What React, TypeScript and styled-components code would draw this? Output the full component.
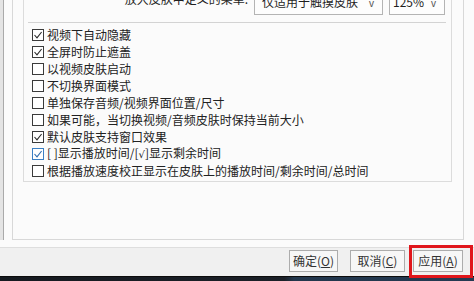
import React from "react";
import styled, { createGlobalStyle } from "styled-components";

const Global = createGlobalStyle`
  html, body {
    margin: 0;
    padding: 0;
    width: 474px;
    height: 281px;
    overflow: hidden;
    background: #fbfbfb;
  }
  body {
    font-family: "Noto Sans CJK SC", "Noto Sans", sans-serif;
    color: #1e1e1e;
  }
  * { box-sizing: border-box; }
`;

const Screen = styled.div`
  width: 474px;
  height: 281px;
  display: flex;
  flex-direction: column;
  background: #fbfbfb;
  overflow: hidden;
`;

const Workspace = styled.div`
  height: 240px;
  flex-shrink: 0;
  display: flex;
`;

const SidePane = styled.div`
  width: 4px;
  background: #e4e4e4;
  border-right: 1px solid #aaaaaa;
`;

const TabPage = styled.div`
  width: 452px;
  margin: -40px 0 0 8px;
  border: 1px solid #d8d8d8;
  border-top: none;
  padding: 0 11px 0 10px;
  display: flex;
  flex-direction: column;
`;

const GroupBox = styled.div`
  border: 1px solid #dcdcdc;
  border-top: none;
  padding: 34px 0 2px 0;
  display: flex;
  flex-direction: column;
`;

const FieldRow = styled.div`
  height: 21px;
  display: flex;
  justify-content: flex-end;
  align-items: center;
  gap: 6px;
  padding-right: 6px;
  font-size: 12px;
`;

const FieldLabel = styled.span`
  line-height: 21px;
  margin-top: -12px;
`;

const Select = styled.div<{ $w: number; $pl: number }>`
  width: ${(p) => p.$w}px;
  height: 21px;
  border: 1px solid #b4b4b4;
  background: #fdfdfd;
  display: flex;
  align-items: center;
  justify-content: space-between;
  padding: 0 8px 0 ${(p) => p.$pl}px;
  font-size: 12px;
  line-height: 21px;
`;

const SelectText = styled.span`
  margin-top: -6px;
`;

const Caret = styled.span`
  font-family: "Liberation Sans", sans-serif;
  font-size: 10px;
  color: #555;
  margin-top: -3px;
`;

const Separator = styled.div`
  height: 1px;
  background: #d3d3d3;
  margin: 7px 5px 0 4px;
`;

const List = styled.div`
  margin-top: 3px;
  padding-left: 8px;
  display: flex;
  flex-direction: column;
`;

const Row = styled.label`
  height: 17px;
  display: flex;
  align-items: center;
  gap: 3px;
  font-size: 12px;
  line-height: 17px;
  white-space: nowrap;
  color: #222;
`;

const Root = styled.span`
  font-family: "DejaVu Sans", sans-serif;
  font-size: 10px;
`;

const Box = styled.span<{ $hot?: boolean }>`
  width: 12px;
  height: 12px;
  flex-shrink: 0;
  border: 1px solid ${(p) => (p.$hot ? "#3a7fc4" : "#3a3a3a")};
  background: #ffffff;
  display: flex;
  align-items: center;
  justify-content: center;
`;

const Footer = styled.div`
  margin-top: 7px;
  height: 29px;
  border-top: 1px solid #dedede;
  background: #f0f0f0;
  display: flex;
  justify-content: flex-end;
  align-items: flex-start;
  padding: 2px 11px 0 0;
`;

const Button = styled.div<{ $w: number; $ml: number }>`
  position: relative;
  width: ${(p) => p.$w}px;
  height: 22px;
  margin-left: ${(p) => p.$ml}px;
  border: 1px solid #acacac;
  background: #f7f7f7;
  display: flex;
  align-items: center;
  justify-content: center;
  font-size: 12px;
  color: #333;
  line-height: 20px;
`;

const Accel = styled.span`
  text-decoration: underline;
`;

const Highlight = styled.div`
  position: absolute;
  top: -6px;
  left: -5px;
  right: -11px;
  bottom: -7px;
  border: 3px solid #e0161b;
  pointer-events: none;
`;

const Taskbar = styled.div`
  height: 5px;
  border-top: 1px solid #0c0c0c;
  background: linear-gradient(90deg, #161a20 0%, #1b2028 60%, #22364c 62%, #243a52 100%);
`;

const Check: React.FC<{ color: string }> = ({ color }) => (
  <svg width="10" height="10" viewBox="0 0 10 10">
    <polyline points="1.5,5 4,7.8 8.6,2" fill="none" stroke={color} strokeWidth="1.1" />
  </svg>
);

const items: { text: React.ReactNode; key: string; checked: boolean; hot?: boolean }[] = [
  { key: "a", text: "视频下自动隐藏", checked: true },
  { key: "b", text: "全屏时防止遮盖", checked: true },
  { key: "c", text: "以视频皮肤启动", checked: false },
  { key: "d", text: "不切换界面模式", checked: false },
  { key: "e", text: "单独保存音频/视频界面位置/尺寸", checked: false },
  { key: "f", text: "如果可能，当切换视频/音频皮肤时保持当前大小", checked: false },
  { key: "g", text: "默认皮肤支持窗口效果", checked: true },
  {
    key: "h",
    text: (
      <>
        [ ]显示播放时间/[<Root>√</Root>]显示剩余时间
      </>
    ),
    checked: true,
    hot: true,
  },
  { key: "i", text: "根据播放速度校正显示在皮肤上的播放时间/剩余时间/总时间", checked: false },
];

export default function App() {
  return (
    <Screen>
      <Global />
      <Workspace>
        <SidePane />
        <TabPage>
          <GroupBox>
            <FieldRow>
              <FieldLabel>放大皮肤中定义的菜单:</FieldLabel>
              <Select $w={129} $pl={7}>
                <SelectText>仅适用于触摸皮肤</SelectText>
                <Caret>v</Caret>
              </Select>
              <Select $w={56} $pl={3}>
                <SelectText>125%</SelectText>
                <Caret>v</Caret>
              </Select>
            </FieldRow>
            <Separator />
            <List>
              {items.map((it) => (
                <Row key={it.key}>
                  <Box $hot={it.hot}>
                    {it.checked && <Check color={it.hot ? "#2f6db0" : "#2a2a2a"} />}
                  </Box>
                  <span>{it.text}</span>
                </Row>
              ))}
            </List>
          </GroupBox>
        </TabPage>
      </Workspace>
      <Footer>
        <Button $w={49} $ml={0}>
          确定(<Accel>O</Accel>)
        </Button>
        <Button $w={55} $ml={12}>
          取消(<Accel>C</Accel>)
        </Button>
        <Button $w={50} $ml={8}>
          应用(<Accel>A</Accel>)
          <Highlight />
        </Button>
      </Footer>
      <Taskbar />
    </Screen>
  );
}
